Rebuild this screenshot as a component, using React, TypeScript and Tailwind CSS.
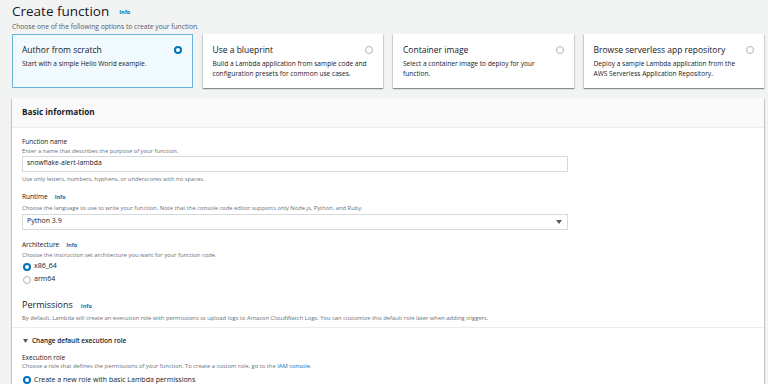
import type { ReactNode } from "react";

const font = { fontFamily: '"Open Sans", "Noto Sans", sans-serif' };

function Info() {
  return <span className="ml-[7px] text-[5.5px] font-bold text-[#0073bb]">Info</span>;
}

function Radio({ checked }: { checked?: boolean }) {
  return checked ? (
    <span className="block h-[8px] w-[8px] shrink-0 rounded-full border-[2.5px] border-[#0073bb] bg-white" />
  ) : (
    <span className="block h-[8px] w-[8px] shrink-0 rounded-full border border-[#aab7b8] bg-white" />
  );
}

interface TileProps {
  title: string;
  lines: string[];
  selected?: boolean;
}

function Tile({ title, lines, selected }: TileProps) {
  return (
    <div
      className={
        selected
          ? "h-[54px] border border-[#6cb3dc] bg-[#f1faff] pl-[9px] pr-[10px] pt-[9px]"
          : "h-[54px] bg-white pl-[10px] pr-[10px] pt-[10px] shadow-[0_1px_1px_rgba(0,28,36,0.3),1px_1px_1px_rgba(0,28,36,0.12),-1px_1px_1px_rgba(0,28,36,0.12)]"
      }
    >
      <div className="relative flex h-[11px] items-center">
        <span className="text-[8.5px] leading-[11px] text-[#16191f]">{title}</span>
        <span className="absolute right-[0px] top-[1.5px] flex">
          <Radio checked={selected} />
        </span>
      </div>
      <p className="mt-[3.5px] whitespace-nowrap text-[6.6px] leading-[10.6px] text-[#16191f]">
        {lines.map((l, i) => (
          <span key={i} className="block">
            {l}
          </span>
        ))}
      </p>
    </div>
  );
}

function Label({ children, className = "" }: { children: ReactNode; className?: string }) {
  return (
    <div className={"flex items-baseline text-[6.5px] font-medium leading-[9px] text-[#16191f] " + className}>
      {children}
    </div>
  );
}

function Hint({ children, className = "" }: { children: ReactNode; className?: string }) {
  return <div className={"text-[5.8px] leading-[8px] text-[#687078] " + className}>{children}</div>;
}

export default function App() {
  return (
    <div className="h-[384px] w-[768px] overflow-hidden bg-[#f2f3f3] pl-[12px] pr-[4px]" style={font}>
      <div className="flex h-[22px] items-center">
        <h1 className="text-[13.5px] leading-[16px] text-[#16191f]">Create function</h1>
        <span className="ml-[10px] mt-[3px] text-[5.5px] font-bold text-[#0073bb]">Info</span>
      </div>
      <div className="h-[9px] text-[6.7px] leading-[9px] text-[#545b64]">
        Choose one of the following options to create your function.
      </div>

      <div className="mt-[3px] grid grid-cols-4 gap-[10px]">
        <Tile selected title="Author from scratch" lines={["Start with a simple Hello World example."]} />
        <Tile
          title="Use a blueprint"
          lines={["Build a Lambda application from sample code and", "configuration presets for common use cases."]}
        />
        <Tile title="Container image" lines={["Select a container image to deploy for your", "function."]} />
        <Tile
          title="Browse serverless app repository"
          lines={["Deploy a sample Lambda application from the", "AWS Serverless Application Repository."]}
        />
      </div>

      <div className="mt-[10px] h-[300px] bg-white shadow-[0_1px_1px_rgba(0,28,36,0.3),1px_1px_1px_rgba(0,28,36,0.15),-1px_1px_1px_rgba(0,28,36,0.15)]">
        <div className="flex h-[30px] items-center border-b border-[#eaeded] bg-[#fafafa] px-[10px]">
          <h2 className="text-[8.2px] font-bold text-[#16191f]">Basic information</h2>
        </div>

        <div className="px-[10px] pt-[9px]">
          <Label>Function name</Label>
          <Hint className="mt-[0.5px]">Enter a name that describes the purpose of your function.</Hint>
          <div className="mt-[1px] flex h-[16px] w-[546px] items-center border border-[#d5dbdb] px-[4px] text-[6.8px] text-[#16191f]">
            snowflake-alert-lambda
          </div>
          <Hint className="mt-[3px]">Use only letters, numbers, hyphens, or underscores with no spaces.</Hint>

          <Label className="mt-[9.5px]">
            Runtime <Info />
          </Label>
          <Hint className="mt-[1.5px]">
            Choose the language to use to write your function. Note that the console code editor supports only
            Node.js, Python, and Ruby.
          </Hint>
          <div className="mt-[2px] flex h-[16px] w-[546px] items-center justify-between border border-[#d5dbdb] pl-[4px] pr-[5px] text-[7px] font-medium text-[#16191f]">
            <span>Python 3.9</span>
            <svg width="6" height="4" viewBox="0 0 6 4">
              <path d="M0 0h6L3 4z" fill="#545b64" />
            </svg>
          </div>

          <Label className="mt-[10.5px]">
            Architecture <Info />
          </Label>
          <Hint className="mt-[0.5px]">Choose the instruction set architecture you want for your function code.</Hint>
          <div className="mt-[2.5px] flex h-[11px] items-center gap-[3px] pl-[1px] text-[7px] text-[#16191f]">
            <Radio checked />
            <span>x86_64</span>
          </div>
          <div className="mt-[2px] flex h-[11px] items-center gap-[3px] pl-[1px] text-[7px] text-[#16191f]">
            <Radio />
            <span>arm64</span>
          </div>

          <div className="mt-[13.5px] flex items-baseline">
            <h3 className="text-[9px] leading-[12px] text-[#16191f]">Permissions</h3>
            <span className="ml-[8px] text-[5.5px] font-bold text-[#0073bb]">Info</span>
          </div>
          <Hint className="mt-[3px]">
            By default, Lambda will create an execution role with permissions to upload logs to Amazon CloudWatch
            Logs. You can customize this default role later when adding triggers.
          </Hint>
        </div>
        <div className="mt-[5.5px] border-t border-[#eaeded]" />

        <div className="px-[10px]">
          <div className="mt-[8px] flex h-[10px] items-center gap-[4px] text-[6.5px] font-semibold text-[#16191f]">
            <svg width="5" height="4" viewBox="0 0 5 4" className="ml-[1px]">
              <path d="M0 0h5L2.5 4z" fill="#545b64" />
            </svg>
            <span>Change default execution role</span>
          </div>
          <Label className="mt-[6.5px]">Execution role</Label>
          <Hint className="mt-[0.5px]">
            Choose a role that defines the permissions of your function. To create a custom role, go to the{" "}
            <span className="text-[#0073bb]">IAM console</span>.
          </Hint>
          <div className="mt-[4.5px] flex h-[11px] items-center gap-[3px] pl-[1px] text-[7px] text-[#16191f]">
            <Radio checked />
            <span>Create a new role with basic Lambda permissions</span>
          </div>
        </div>
      </div>
    </div>
  );
}
